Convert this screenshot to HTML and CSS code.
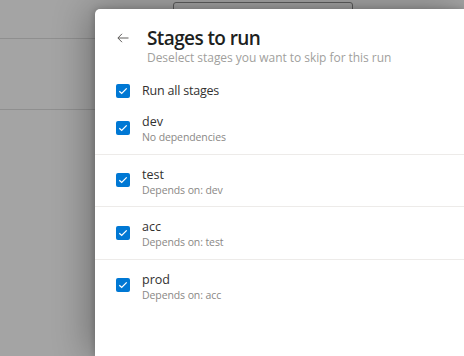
FILE: index.html
```html
<!DOCTYPE html>
<html>
<head>
<meta charset="utf-8">
<link rel="stylesheet" href="styles.css">
</head>
<body>
<div class="backdrop">
  <div class="bg-top"><div class="bg-field"></div></div>
  <div class="bg-row bg-row1"></div>
  <div class="bg-row bg-row2"></div>
</div>
<aside class="panel">
  <header class="head">
    <button class="back" aria-label="Back">
      <svg width="12" height="10" viewBox="0 0 12 10"><path d="M5 0.8 L0.9 5 L5 9.2 M0.9 5 H11.5" fill="none" stroke="#605e5c" stroke-width="1"/></svg>
    </button>
    <div class="titles">
      <h1 class="title">Stages to run</h1>
      <p class="subtitle">Deselect stages you want to skip for this run</p>
    </div>
  </header>
  <label class="all">
    <span class="cb"><svg width="10" height="8" viewBox="0 0 10 8"><path d="M1.3 4.2 L3.7 6.4 L8.7 1.4" fill="none" stroke="#fff" stroke-width="1.3"/></svg></span>
    <span class="all-text">Run all stages</span>
  </label>
  <ul class="stages">
    <li class="stage">
      <span class="cb"><svg width="10" height="8" viewBox="0 0 10 8"><path d="M1.3 4.2 L3.7 6.4 L8.7 1.4" fill="none" stroke="#fff" stroke-width="1.3"/></svg></span>
      <div class="info"><div class="name">dev</div><div class="dep">No dependencies</div></div>
    </li>
    <li class="stage">
      <span class="cb"><svg width="10" height="8" viewBox="0 0 10 8"><path d="M1.3 4.2 L3.7 6.4 L8.7 1.4" fill="none" stroke="#fff" stroke-width="1.3"/></svg></span>
      <div class="info"><div class="name">test</div><div class="dep">Depends on: dev</div></div>
    </li>
    <li class="stage">
      <span class="cb"><svg width="10" height="8" viewBox="0 0 10 8"><path d="M1.3 4.2 L3.7 6.4 L8.7 1.4" fill="none" stroke="#fff" stroke-width="1.3"/></svg></span>
      <div class="info"><div class="name">acc</div><div class="dep">Depends on: test</div></div>
    </li>
    <li class="stage last">
      <span class="cb"><svg width="10" height="8" viewBox="0 0 10 8"><path d="M1.3 4.2 L3.7 6.4 L8.7 1.4" fill="none" stroke="#fff" stroke-width="1.3"/></svg></span>
      <div class="info"><div class="name">prod</div><div class="dep">Depends on: acc</div></div>
    </li>
  </ul>
</aside>
</body>
</html>
```
FILE: styles.css
```css
html, body {
  margin: 0;
  padding: 0;
  width: 464px;
  height: 356px;
  overflow: hidden;
}
body {
  background: #a4a4a4;
  font-family: "Open Sans", "Noto Sans", sans-serif;
  position: relative;
}
.backdrop {
  display: flex;
  flex-direction: column;
}
.bg-top {
  height: 38px;
  border-bottom: 1px solid #8f8f8f;
  position: relative;
}
.bg-field {
  margin-left: 173px;
  margin-top: 2px;
  width: 178px;
  height: 30px;
  border: 1px solid #5c5c5c;
  border-radius: 3px;
}
.bg-row1 {
  height: 70px;
  border-bottom: 1px solid #8f8f8f;
}
.panel {
  position: absolute;
  left: 95px;
  top: 9px;
  right: 0;
  bottom: 0;
  background: #fff;
  border-top-left-radius: 5px;
  box-shadow: -6px 0 36px rgba(0, 0, 0, 0.32), -1px 0 6px rgba(0, 0, 0, 0.18);
  padding-top: 17px;
  box-sizing: border-box;
}
.head {
  display: flex;
  align-items: flex-start;
  padding-left: 22px;
}
.back {
  border: 0;
  background: none;
  padding: 0;
  margin-top: 7px;
  width: 12px;
  height: 10px;
  display: flex;
}
.titles {
  margin-left: 18px;
}
.title {
  margin: 0;
  font-size: 19px;
  font-weight: 600;
  line-height: 24px;
  color: #201f1e;
  letter-spacing: -0.6px;
}
.subtitle {
  margin: 0;
  font-size: 12px;
  line-height: 16px;
  color: #a19f9d;
  letter-spacing: -0.05px;
}
.all {
  display: flex;
  align-items: center;
  gap: 12px;
  padding-left: 21px;
  margin-top: 15px;
  height: 20px;
}
.cb {
  width: 14px;
  height: 14px;
  flex: none;
  background: #0078d4;
  border-radius: 2px;
  display: flex;
  align-items: center;
  justify-content: center;
}
.all-text {
  font-size: 12.5px;
  color: #323130;
  line-height: 20px;
  letter-spacing: -0.2px;
}
.stages {
  list-style: none;
  margin: 1px 0 0;
  padding: 0;
}
.stage {
  display: flex;
  align-items: flex-start;
  gap: 12px;
  padding: 12px 0 9.5px 21px;
  border-bottom: 1px solid #edebe9;
}
.stage.last {
  border-bottom: 0;
}
.stage .cb {
  margin-top: 6.5px;
}
.name {
  font-size: 12.5px;
  line-height: 16px;
  color: #323130;
}
.dep {
  font-size: 10.5px;
  line-height: 14px;
  color: #8a8886;
  letter-spacing: -0.1px;
}
```
